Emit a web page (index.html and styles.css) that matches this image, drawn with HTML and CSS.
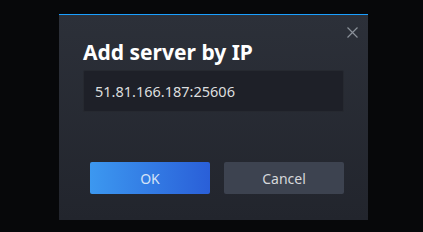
FILE: index.html
```html
<!DOCTYPE html>
<html lang="en">
<head>
    <meta charset="UTF-8">
    <title>Add server by IP</title>
    <link rel="stylesheet" href="styles.css">
</head>
<body>
    <div class="dialog">
        <button class="close" aria-label="Close">
            <svg width="11" height="11" viewBox="0 0 11 11">
                <path d="M0.5 0.5 L10.5 10.5 M10.5 0.5 L0.5 10.5" stroke="#8a9099" stroke-width="1.2" fill="none"/>
            </svg>
        </button>
        <h1 class="title">Add server by IP</h1>
        <div class="field">51.81.166.187:25606</div>
        <div class="actions">
            <button class="btn btn-ok">OK</button>
            <button class="btn btn-cancel">Cancel</button>
        </div>
    </div>
</body>
</html>
```

FILE: styles.css
```css
body {
    margin: 0;
    padding-top: 14px;
    background-color: #07080a;
    font-family: "Noto Sans", sans-serif;
}
.dialog {
    position: relative;
    box-sizing: border-box;
    width: 309px;
    height: 206px;
    margin-left: 59px;
    padding: 24px 24px 26px;
    border-top: 1px solid #1a9fff;
    background: linear-gradient(to bottom, #2c3039, #22252d);
}
.close {
    position: absolute;
    top: 12px;
    right: 10px;
    width: 11px;
    height: 11px;
    padding: 0;
    border: none;
    background: none;
    display: flex;
}
.title {
    margin: 0;
    font-size: 21px;
    line-height: 26px;
    font-weight: 700;
    color: #ffffff;
}
.field {
    box-sizing: border-box;
    margin-top: 5px;
    height: 42px;
    padding: 0 11px;
    display: flex;
    align-items: center;
    background-color: #1e2028;
    border: 1px solid #262930;
    border-radius: 2px;
    font-size: 14.5px;
    color: #dcdedf;
}
.actions {
    margin-top: 50px;
    display: flex;
    justify-content: flex-end;
    gap: 14px;
}
.btn {
    width: 120px;
    height: 32px;
    border: none;
    border-radius: 2px;
    font-family: "Noto Sans", sans-serif;
    font-size: 14px;
}
.btn-ok {
    background: linear-gradient(to right, #3c98f0, #2a5fd8);
    color: #d4e3f7;
}
.btn-cancel {
    background-color: #3d4350;
    color: #d6d8db;
}
```
